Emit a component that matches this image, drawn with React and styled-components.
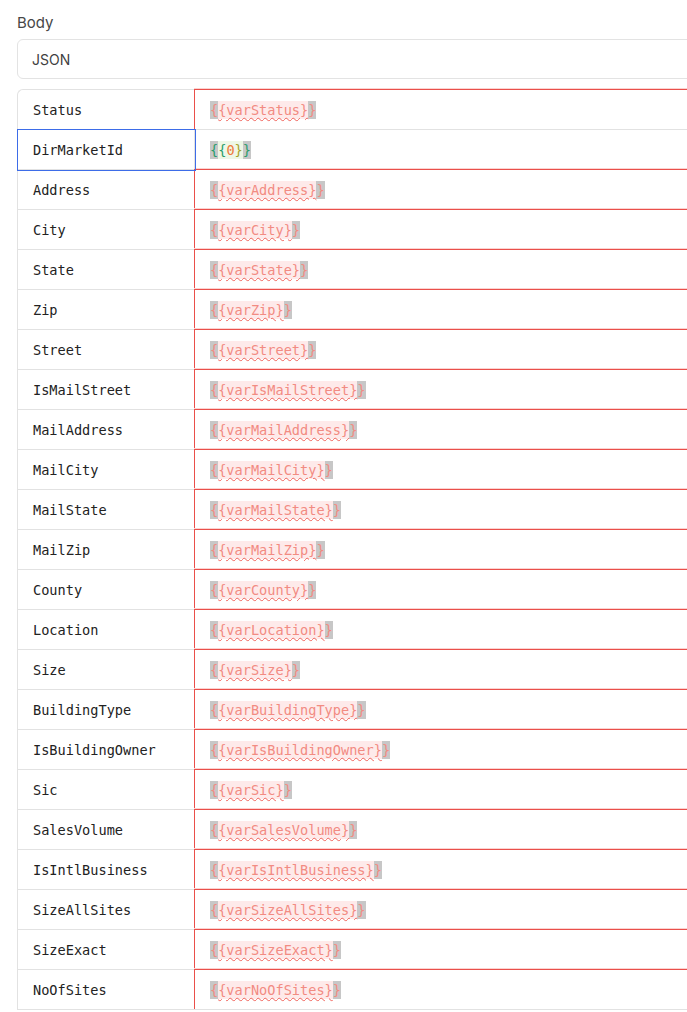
import React from 'react';
import styled, { createGlobalStyle } from 'styled-components';

const GlobalStyle = createGlobalStyle`
  body {
    margin: 0;
    background: #fff;
    overflow: hidden;
  }
`;

const Page = styled.div`
  padding: 13px 0 0 17px;
  width: 900px;
  font-family: Inter, 'Liberation Sans', sans-serif;
`;

const Label = styled.div`
  font-size: 15px;
  line-height: 20px;
  color: #474747;
  margin-bottom: 6px;
`;

const Select = styled.div`
  height: 38px;
  border: 1px solid #e3e3e3;
  border-radius: 6px;
  display: flex;
  align-items: center;
  padding: 0 14px;
  font-size: 14px;
  color: #3f3f3f;
  margin-bottom: 10px;
`;

const Table = styled.div`
  display: grid;
  border-bottom: 1px solid #e2e2e2;
`;

const Row = styled.div`
  display: grid;
  grid-template-columns: 177px 1fr;
  height: 40px;
  font-family: 'DejaVu Sans Mono', 'Liberation Mono', monospace;
  font-size: 13.6px;
`;

const KeyCell = styled.div`
  position: relative;
  display: flex;
  align-items: center;
  padding-left: 15px;
  border-top: 1px solid #e2e2e2;
  border-left: 1px solid #e2e2e2;
  border-top-left-radius: ${(p) => (p.$first ? '6px' : '0')};
  color: #222;

  ${(p) =>
    p.$selected &&
    `
    &::after {
      content: '';
      position: absolute;
      top: -1px;
      left: -1px;
      right: -2px;
      bottom: -2px;
      border: 1px solid #3d6ce8;
      z-index: 2;
    }
  `}
`;

const ValueCell = styled.div`
  display: flex;
  align-items: center;
  padding-left: 15px;
  border-top: 1px solid ${(p) => (p.$error ? '#ea4f4a' : '#e2e2e2')};
  border-left: 1px solid ${(p) => (p.$error ? '#ea4f4a' : '#e2e2e2')};
  box-shadow: ${(p) => (p.$error ? '0 -1px 0 #fbd3d1' : 'none')};
`;

const Brace = styled.span`
  background: ${(p) => (p.$plain ? 'transparent' : '#c7c7c7')};
  color: ${(p) => (p.$ok ? '#2a9d6a' : '#f28b82')};
  line-height: 18px;
`;

const Inner = styled.span`
  background: ${(p) => (p.$ok ? '#eef7e6' : '#feeaea')};
  color: #f28b82;
  line-height: 18px;
  text-decoration: ${(p) => (p.$ok ? 'none' : 'underline wavy #f0625a')};
  text-decoration-thickness: 1px;
  text-underline-offset: 2px;
`;

const Num = styled.span`
  color: #ee7a3b;
`;

const InnerBrace = styled.span`
  color: #a7a22a;
`;

const keys = [
  'Status',
  'DirMarketId',
  'Address',
  'City',
  'State',
  'Zip',
  'Street',
  'IsMailStreet',
  'MailAddress',
  'MailCity',
  'MailState',
  'MailZip',
  'County',
  'Location',
  'Size',
  'BuildingType',
  'IsBuildingOwner',
  'Sic',
  'SalesVolume',
  'IsIntlBusiness',
  'SizeAllSites',
  'SizeExact',
  'NoOfSites',
];

function Value({ name }) {
  if (name === 'DirMarketId') {
    return (
      <>
        <Brace $ok>{'{'}</Brace>
        <Inner $ok>
          <Brace $ok $plain>
            {'{'}
          </Brace>
          <Num>0</Num>
          <InnerBrace>{'}'}</InnerBrace>
        </Inner>
        <Brace $ok>{'}'}</Brace>
      </>
    );
  }
  return (
    <>
      <Brace>{'{'}</Brace>
      <Inner>{`{var${name}}`}</Inner>
      <Brace>{'}'}</Brace>
    </>
  );
}

export default function App() {
  return (
    <>
      <GlobalStyle />
      <Page>
        <Label>Body</Label>
        <Select>JSON</Select>
        <Table>
          {keys.map((k, i) => (
            <Row key={k}>
              <KeyCell $first={i === 0} $selected={k === 'DirMarketId'}>
                {k}
              </KeyCell>
              <ValueCell $error={k !== 'DirMarketId'}>
                <Value name={k} />
              </ValueCell>
            </Row>
          ))}
        </Table>
      </Page>
    </>
  );
}
